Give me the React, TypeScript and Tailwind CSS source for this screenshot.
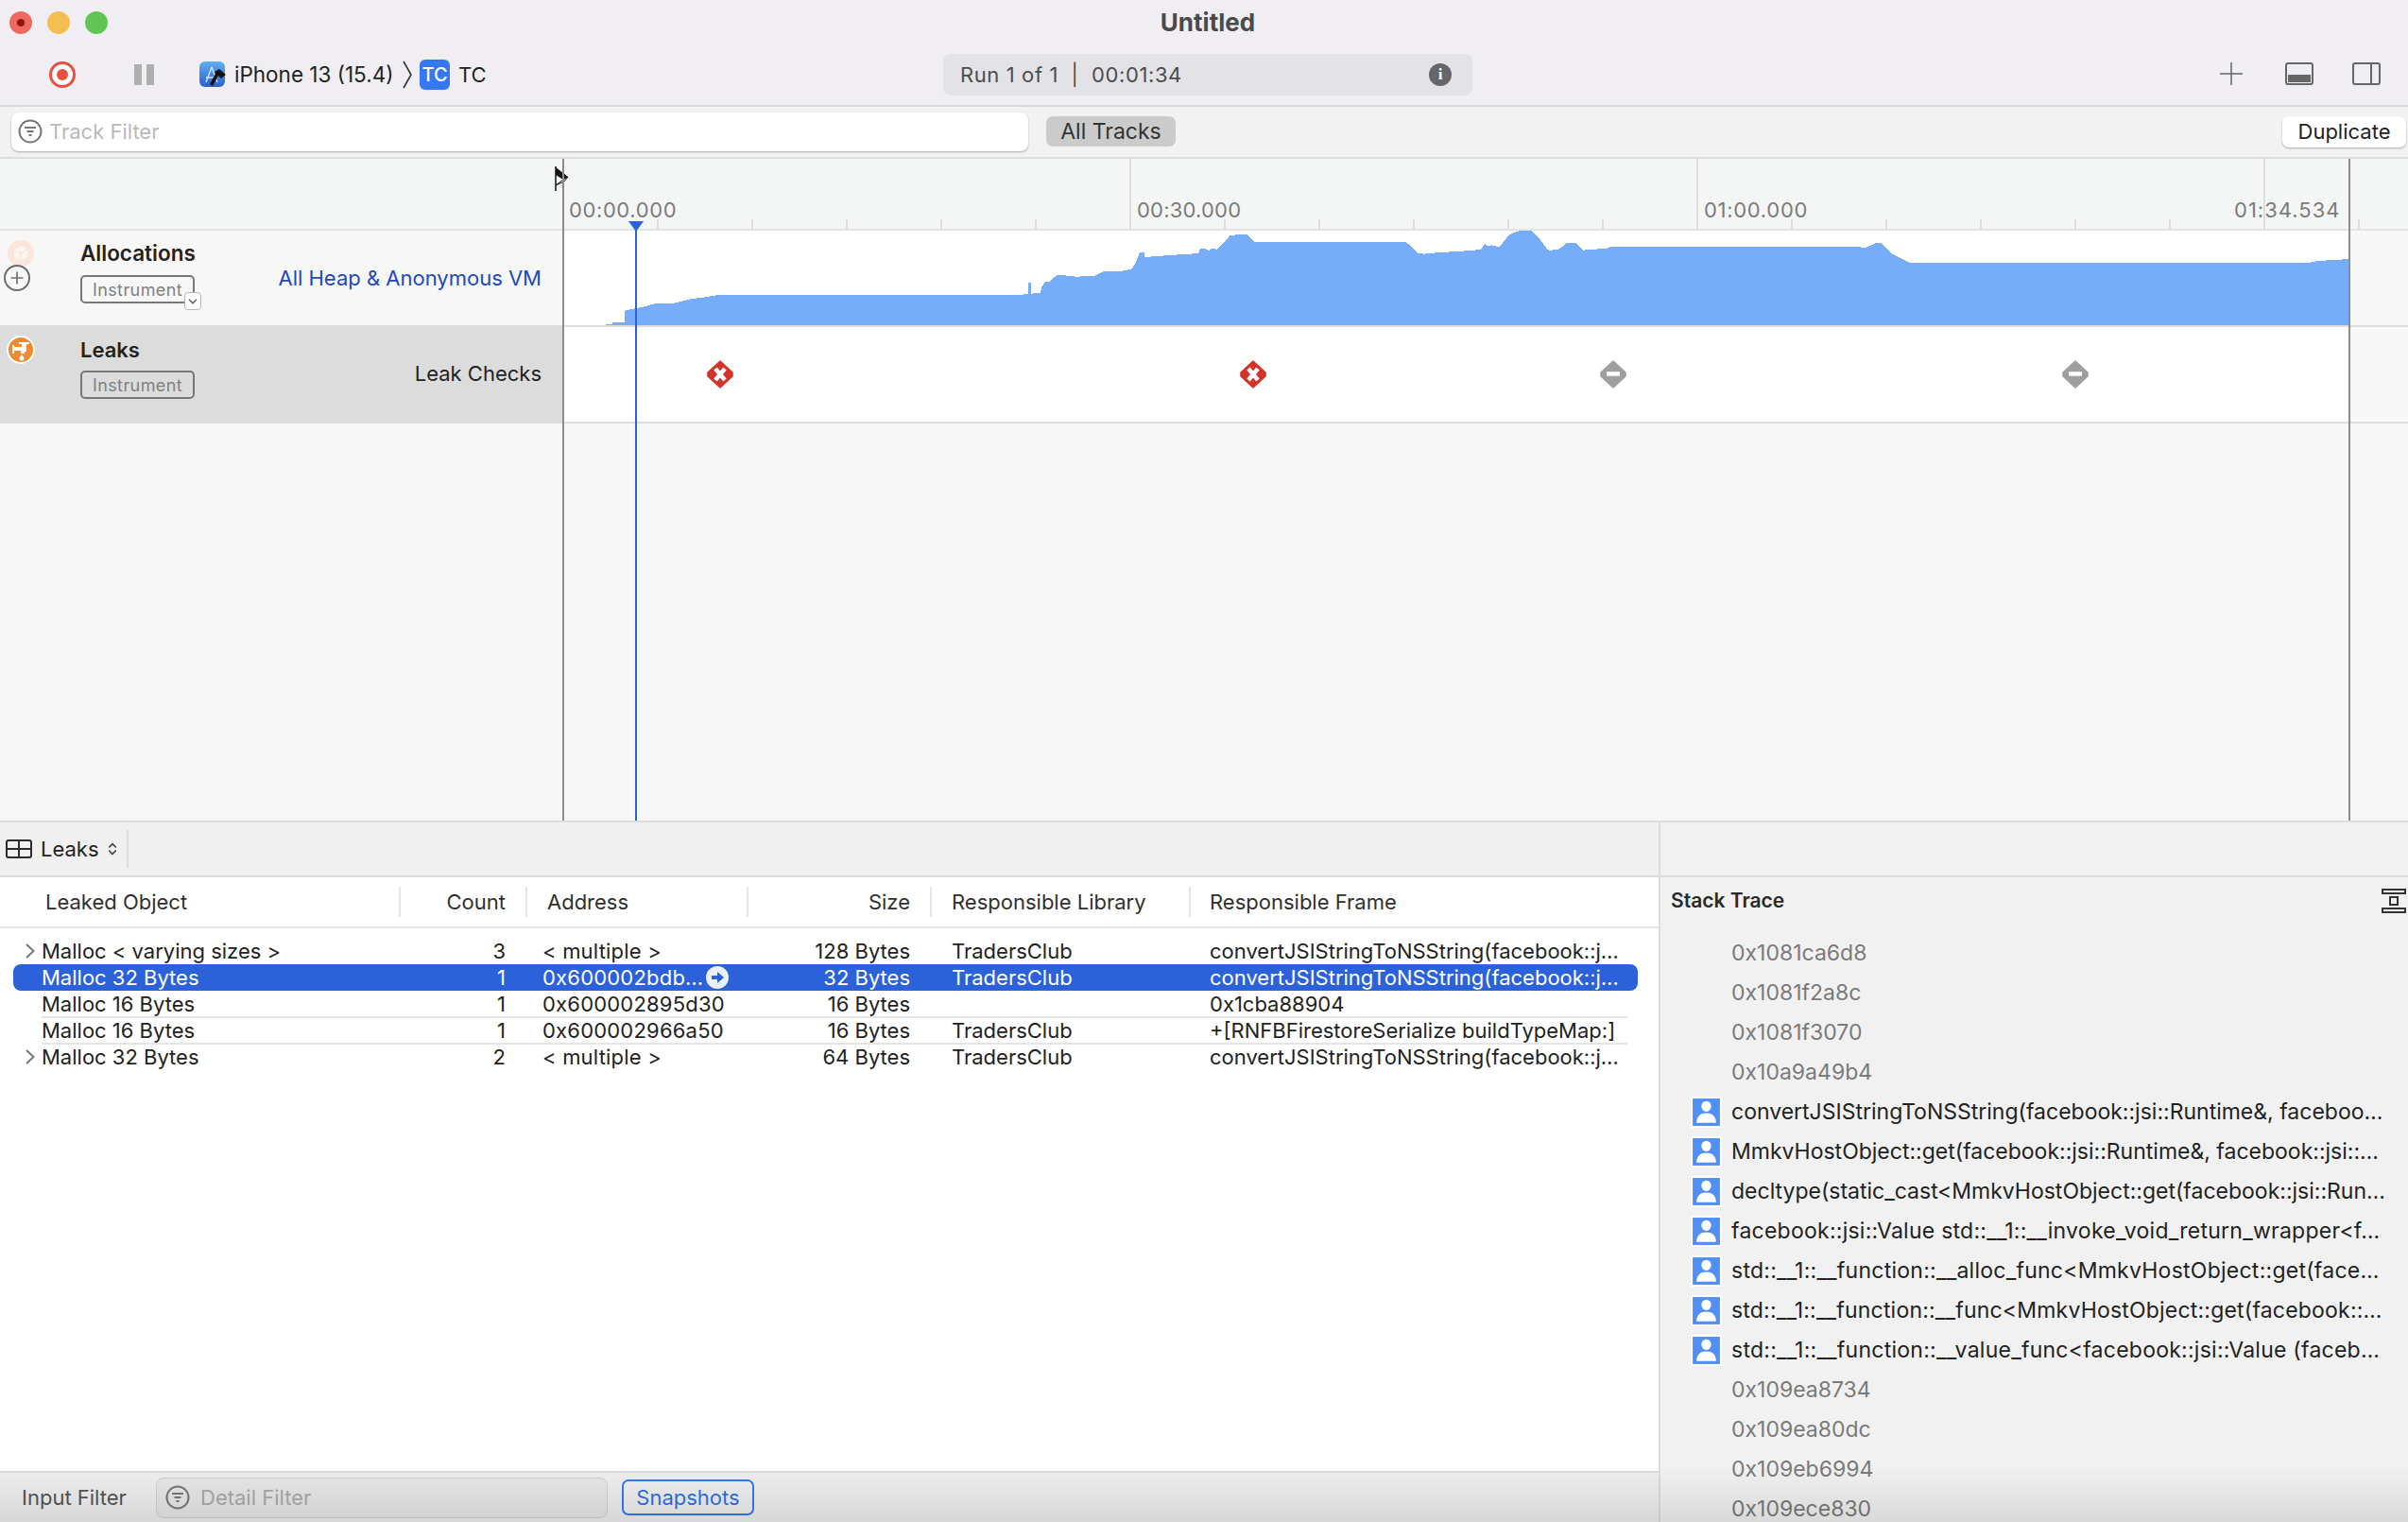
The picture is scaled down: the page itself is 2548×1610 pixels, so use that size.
import { ChevronDown, ChevronsUpDown, Plus } from 'lucide-react'

const font = "font-['Inter','Liberation_Sans',sans-serif]"

// chart outline read off the reference, x in page px from the timeline's left edge
const chartTop: [number, number][] = [
  [64, 432], [64, 430], [76, 430], [76, 424], [96, 424], [96, 386], [115, 378], [130, 372], [145, 364], [178, 362], [190, 356], [205, 349], [230, 343], [250, 336],
  [752, 336], [765, 332], [765, 297], [770, 297], [770, 332], [785, 330], [788, 310], [793, 295], [800, 295], [808, 280], [815, 272], [845, 278], [875, 276], [890, 262], [920, 260], [935, 255], [942, 240], [950, 202], [958, 202], [958, 216],
  [1000, 210], [1048, 204], [1050, 190], [1060, 190], [1065, 195], [1070, 188], [1078, 192], [1090, 170], [1100, 148], [1110, 145], [1128, 145], [1140, 168], [1392, 168], [1402, 185], [1412, 205],
]
const chartEnd: [number, number][] = [
  [0, 203], [10, 206], [30, 202], [70, 197], [100, 192], [106, 174], [112, 182], [118, 178], [125, 182], [130, 183], [145, 145], [160, 133], [180, 133], [190, 150], [205, 190], [210, 195], [225, 190], [235, 172], [250, 170], [262, 194], [300, 188], [305, 183],
  [698, 183], [708, 187], [725, 172], [735, 172], [750, 205], [780, 234], [1410, 234], [1425, 228], [1475, 222], [1475, 432],
]
const chartPoints = [
  ...chartTop.map(([x, y]) => `${600 + x / 1.568 - 596},${200 + y / 3 - 244}`),
  ...chartEnd.map(([x, y]) => `${1500 + x / 1.496 - 596},${200 + y / 3 - 244}`),
].join(' ')

const ticks = Array.from({ length: 20 }).map((_, i) => i)

const leakRows = [
  { name: 'Malloc < varying sizes >', count: '3', address: '< multiple >', size: '128 Bytes', lib: 'TradersClub', frame: 'convertJSIStringToNSString(facebook::j…', more: true },
  { name: 'Malloc 32 Bytes', count: '1', address: '0x600002bdb…', size: '32 Bytes', lib: 'TradersClub', frame: 'convertJSIStringToNSString(facebook::j…', selected: true },
  { name: 'Malloc 16 Bytes', count: '1', address: '0x600002895d30', size: '16 Bytes', lib: '', frame: '0x1cba88904', line: true },
  { name: 'Malloc 16 Bytes', count: '1', address: '0x600002966a50', size: '16 Bytes', lib: 'TradersClub', frame: '+[RNFBFirestoreSerialize buildTypeMap:]', line: true },
  { name: 'Malloc 32 Bytes', count: '2', address: '< multiple >', size: '64 Bytes', lib: 'TradersClub', frame: 'convertJSIStringToNSString(facebook::j…', more: true },
]

const stackRows = [
  { text: '0x1081ca6d8', style: 'text-[#7a7a7a]' },
  { text: '0x1081f2a8c', style: 'text-[#7a7a7a]' },
  { text: '0x1081f3070', style: 'text-[#7a7a7a]' },
  { text: '0x10a9a49b4', style: 'text-[#7a7a7a]' },
  { text: 'convertJSIStringToNSString(facebook::jsi::Runtime&, faceboo…', user: true, style: 'text-[#222]' },
  { text: 'MmkvHostObject::get(facebook::jsi::Runtime&, facebook::jsi::…', user: true, style: 'text-[#222]' },
  { text: 'decltype(static_cast<MmkvHostObject::get(facebook::jsi::Run…', user: true, style: 'text-[#222]' },
  { text: 'facebook::jsi::Value std::__1::__invoke_void_return_wrapper<f…', user: true, style: 'text-[#222] tracking-[0.25px]' },
  { text: 'std::__1::__function::__alloc_func<MmkvHostObject::get(face…', user: true, style: 'text-[#222] tracking-[0.25px]' },
  { text: 'std::__1::__function::__func<MmkvHostObject::get(facebook::…', user: true, style: 'text-[#222] tracking-[0.2px]' },
  { text: 'std::__1::__function::__value_func<facebook::jsi::Value (faceb…', user: true, style: 'text-[#222] tracking-[0.25px]' },
  { text: '0x109ea8734', style: 'text-[#7a7a7a]' },
  { text: '0x109ea80dc', style: 'text-[#7a7a7a]' },
  { text: '0x109eb6994', style: 'text-[#7a7a7a]' },
  { text: '0x109ece830', style: 'text-[#7a7a7a]' },
]

function FilterIcon({ className }: { className: string }) {
  return (
    <svg viewBox="0 0 26 26" className={className} fill="none" stroke="#777" strokeWidth="2">
      <circle cx="13" cy="13" r="11.5" />
      <path d="M7 9h12M9.5 13h7M11.5 17h3" />
    </svg>
  )
}

function UserIcon() {
  return (
    <svg viewBox="0 0 32 32" className="w-[33px] h-[33px]">
      <rect x="0" y="0" width="32" height="32" fill="#ffffff" />
      <rect x="2" y="2" width="28" height="28" fill="#518ff5" />
      <ellipse cx="16" cy="10" rx="5" ry="5.5" fill="#ffffff" />
      <path d="M6 27c0-7 4-10 10-10s10 3 10 10z" fill="#ffffff" />
    </svg>
  )
}

function Diamond({ left, kind }: { left: string; kind: 'error' | 'stop' }) {
  return (
    <svg viewBox="0 0 30 30" className={`absolute top-[35px] w-[30px] h-[30px] ${left}`}>
      <path d="M15 1 L28 13 V17 L15 29 L2 17 V13 Z" fill={kind === 'error' ? '#d2332a' : '#9f9f9f'} stroke={kind === 'error' ? '#d2332a' : '#9f9f9f'} strokeWidth="1.5" strokeLinejoin="round" />
      {kind === 'error' ? (
        <path d="M10 9 L20 21 M20 9 L10 21" stroke="#ffffff" strokeWidth="4.5" />
      ) : (
        <path d="M8 14.5 H22" stroke="#ffffff" strokeWidth="4.5" />
      )}
    </svg>
  )
}

function Instrument() {
  return (
    <div className="w-[121px] h-[30px] flex items-center justify-center rounded-[5px] border-2 border-[#787878] text-[18px] tracking-[0.4px] text-[#808080]">
      Instrument
    </div>
  )
}

export default function App() {
  return (
    <div className={`${font} relative w-[2548px] h-[1610px] overflow-hidden flex flex-col bg-white text-[#222]`}>
      {/* Toolbar */}
      <div className="relative h-[113px] shrink-0 bg-[#f0eef3] border-b-2 border-[#d8d8d8]">
        <div className="flex items-center justify-center h-[46px] pl-[8px] text-[26px] font-bold text-[#4a4a4a]">Untitled</div>
        <div className="absolute left-[10px] top-[12px] flex gap-[16px]">
          <div className="w-[24px] h-[24px] rounded-full bg-[#ee6a5f] flex items-center justify-center">
            <div className="w-[8px] h-[8px] rounded-full bg-[#8c1a10]" />
          </div>
          <div className="w-[24px] h-[24px] rounded-full bg-[#f5bf4f]" />
          <div className="w-[24px] h-[24px] rounded-full bg-[#61c554]" />
        </div>
        <div className="flex items-center h-[46px] mt-[10px]">
          <div className="ml-[52px] w-[28px] h-[28px] rounded-full border-[3px] border-[#e8503f] flex items-center justify-center bg-white">
            <div className="w-[12px] h-[12px] rounded-full bg-[#e8503f]" />
          </div>
          <div className="ml-[62px] flex gap-[5px]">
            <div className="w-[8px] h-[22px] bg-[#aeaeae]" />
            <div className="w-[8px] h-[22px] bg-[#aeaeae]" />
          </div>
          <svg viewBox="0 0 30 30" className="ml-[47px] w-[30px] h-[30px]">
            <defs>
              <linearGradient id="appIcon" x1="0" y1="0" x2="0" y2="1">
                <stop offset="0" stopColor="#5fb0f2" />
                <stop offset="1" stopColor="#2a5fd0" />
              </linearGradient>
            </defs>
            <rect x="1" y="1" width="27" height="27" rx="6" fill="url(#appIcon)" />
            <path d="M8 23 L14 7 M20 23 L14 7 M8 18 H20" stroke="#cfe4ff" strokeWidth="1.4" fill="none" />
            <path d="M22 9 L29 15 L24 19 L21 16 L15 27 L12 25 L18 14 L17 12 Z" fill="#111" />
          </svg>
          <span className="ml-[8px] w-[168px] text-[22.5px] whitespace-nowrap">iPhone 13 (15.4)</span>
          <svg viewBox="0 0 12 30" className="ml-[9px] w-[12px] h-[30px]" fill="none" stroke="#333" strokeWidth="1.6">
            <path d="M2 1 L10 15 L2 29" />
          </svg>
          <div className="ml-[7px] w-[32px] h-[32px] rounded-[6px] bg-[#3478f6] text-white text-[20px] font-medium flex items-center justify-center">TC</div>
          <span className="ml-[9px] text-[22px]">TC</span>
          <div className="absolute left-[998px] top-[57px] w-[560px] h-[44px] rounded-[8px] bg-[#e3e2e7] flex items-center justify-between pl-[18px] pr-[22px]">
            <span className="text-[22px] tracking-[0.6px] text-[#4c4c4c] whitespace-pre">Run 1 of 1  |  00:01:34</span>
            <div className="w-[24px] h-[24px] rounded-full bg-[#66666c] text-white text-[17px] font-bold flex items-center justify-center font-['Liberation_Serif',serif]">i</div>
          </div>
          <div className="absolute right-[29px] top-[66px] flex items-center gap-[41px]">
            <svg viewBox="0 0 24 24" className="mr-[4px] w-[24px] h-[24px]" fill="none" stroke="#666" strokeWidth="1.5">
              <path d="M12 0v24M0 12h24" />
            </svg>
            <div className="w-[30px] h-[24px] rounded-[3px] border-2 border-[#666] flex flex-col justify-end p-[1px]">
              <div className="h-[8px] bg-[#666]" />
            </div>
            <div className="w-[30px] h-[24px] rounded-[3px] border-2 border-[#666] flex justify-end">
              <div className="w-[9px] border-l-2 border-[#666]" />
            </div>
          </div>
        </div>
      </div>

      {/* Track filter */}
      <div className="h-[55px] shrink-0 bg-[#f2f2f2] border-b-2 border-[#dcdcdc] flex items-center pl-[12px] pr-[2px] pb-[1px]">
        <div className="w-[1076px] h-[41px] rounded-[8px] bg-white shadow-[0_1px_2px_rgba(0,0,0,0.3)] flex items-center pl-[7px] gap-[7px]">
          <FilterIcon className="w-[26px] h-[26px]" />
          <span className="text-[22px] text-[#b9b9b9]">Track Filter</span>
        </div>
        <div className="ml-[19px] w-[137px] h-[32px] rounded-[7px] bg-[#cbcbcb] text-[23px] text-[#333] flex items-center justify-center">All Tracks</div>
        <div className="ml-auto w-[131px] h-[33px] rounded-[7px] bg-white shadow-[0_1px_2px_rgba(0,0,0,0.3)] text-[22px] flex items-center justify-center">Duplicate</div>
      </div>

      {/* Timeline */}
      <div className="relative h-[702px] shrink-0 bg-[#f7f7f7] border-b-2 border-[#dcdcdc]">
        <div className="relative h-[76px] bg-[#f4f6f5] border-b-2 border-[#e3e3e3]">
          {ticks.map((i) => (
            <div key={i} className={`absolute bottom-0 w-[2px] bg-[#dedede] ${i % 6 === 0 ? 'h-[74px]' : 'h-[10px]'}`} style={{ left: 595 + i * 100 }} />
          ))}
          <span className="absolute left-[602px] top-[38px] text-[22px] tracking-[0.6px] text-[#7b7b7b]">00:00.000</span>
          <span className="absolute left-[1203px] top-[38px] text-[22px] tracking-[0.2px] text-[#7b7b7b]">00:30.000</span>
          <span className="absolute left-[1803px] top-[38px] text-[22px] tracking-[0.7px] text-[#7b7b7b]">01:00.000</span>
          <span className="absolute left-[2364px] top-[38px] text-[22px] tracking-[1px] text-[#7b7b7b]">01:34.534</span>
          <svg viewBox="0 0 16 26" className="absolute left-[587px] top-[8px] w-[16px] h-[26px]">
            <path d="M1 0 V26" stroke="#111" strokeWidth="1.5" />
            <path d="M1 1 L14 11 L9 14 L1 9 Z" fill="#111" />
            <path d="M1 20 L9 14 L14 11 L10 16 Z" fill="#fff" stroke="#111" strokeWidth="1" />
          </svg>
        </div>

        {/* Allocations track */}
        <div className="flex h-[102px] border-b-2 border-[#dedede]">
          <div className="relative w-[596px] shrink-0 bg-[#f7f7f7] pl-[85px] pt-[11px]">
            <div className="text-[22.5px] font-semibold leading-[26px]">Allocations</div>
            <div className="relative mt-[10px] w-[121px]">
              <Instrument />
              <div className="absolute left-[110px] top-[18px] w-[18px] h-[19px] rounded-[4px] bg-white border border-[#b5b5b5] flex items-center justify-center">
                <ChevronDown className="w-[14px] h-[14px] text-[#666]" strokeWidth={3} />
              </div>
            </div>
            <svg viewBox="0 0 28 28" className="absolute left-[8px] top-[10px] w-[28px] h-[28px]">
              <circle cx="14" cy="14" r="14" fill="#fae6da" />
              <path d="M14 6 L21 10 V18 L14 22 L7 18 V10 Z" fill="#fdf5ef" />
              <path d="M7 10 L14 14 L21 10 M14 14 V22" fill="none" stroke="#f7dfd0" strokeWidth="1" />
            </svg>
            <div className="absolute left-[4px] top-[36px] w-[28px] h-[28px] rounded-full border-2 border-[#6d6d6d] bg-[#f7f7f7] flex items-center justify-center">
              <Plus className="w-[20px] h-[20px] text-[#6d6d6d]" strokeWidth={2} />
            </div>
            <span className="absolute right-[23px] top-[34px] text-[22px] text-[#1e49c0] whitespace-nowrap">All Heap &amp; Anonymous VM</span>
          </div>
          <div className="w-[1890px] shrink-0 bg-white">
            <svg className="w-[1890px] h-[100px] block" shapeRendering="crispEdges">
              <polygon points={chartPoints} fill="#77acf8" />
            </svg>
          </div>
        </div>

        {/* Leaks track */}
        <div className="flex h-[102px] border-b-2 border-[#dedede]">
          <div className="relative w-[596px] shrink-0 bg-[#dcdcdc] pl-[85px] pt-[11px]">
            <div className="text-[22px] font-semibold leading-[26px]">Leaks</div>
            <div className="mt-[9px]">
              <Instrument />
            </div>
            <svg viewBox="0 0 30 30" className="absolute left-[7px] top-[9px] w-[30px] h-[30px]">
              <circle cx="15" cy="15" r="14" fill="#ee8a2f" stroke="#ffffff" strokeWidth="2" />
              <path d="M13 7h11v2h-3v8h-2v2h-4v-3H8v3H6v-9h2v2h8V9h-3z" fill="#ffffff" />
              <path d="M16 20c1.5 2 2.5 3 2.5 4a2.5 2.5 0 0 1-5 0c0-1 1-2 2.500-4z" fill="#ffffff" />
            </svg>
            <span className="absolute right-[23px] top-[33px] text-[22px] whitespace-nowrap">Leak Checks</span>
          </div>
          <div className="relative w-[1890px] shrink-0 bg-white">
            <Diamond left="left-[151px]" kind="error" />
            <Diamond left="left-[715px]" kind="error" />
            <Diamond left="left-[1096px]" kind="stop" />
            <Diamond left="left-[1585px]" kind="stop" />
          </div>
        </div>

        {/* Timeline edges and playhead */}
        <div className="absolute left-[595px] top-0 bottom-0 w-[2px] bg-[#8c8c8c]" />
        <div className="absolute left-[2485px] top-0 bottom-0 w-[2px] bg-[#8c8c8c]" />
        <div className="absolute left-[672px] top-[76px] bottom-0 w-[2px] bg-[#2a62d9]" />
        <div className="absolute left-[665px] top-[66px] w-0 h-0 border-x-[8px] border-x-transparent border-t-[11px] border-t-[#2a62d9]" />
      </div>

      {/* Detail area */}
      <div className="flex flex-1 min-h-0">
        <div className="flex flex-col w-[1755px] shrink-0">
          <div className="h-[58px] shrink-0 bg-[#f0f0f0] border-b-2 border-[#dcdcdc] flex items-center pl-[6px]">
            <svg viewBox="0 0 28 20" className="w-[28px] h-[20px]" fill="none" stroke="#2c2c2c" strokeWidth="2">
              <rect x="1" y="1" width="26" height="18" rx="2" />
              <path d="M14 1v18M1 10h26" />
            </svg>
            <span className="ml-[9px] text-[22px]">Leaks</span>
            <ChevronsUpDown className="ml-[6px] w-[16px] h-[20px] text-[#444]" strokeWidth={2.5} />
            <div className="ml-[7px] w-[2px] h-[40px] bg-[#dcdcdc]" />
          </div>
          <div className="h-[54px] shrink-0 bg-white border-b-2 border-[#e5e5e5] flex items-center text-[22px] text-[#303030]">
            <div className="w-[424px] pl-[48px] h-[32px] leading-[32px] border-r-2 border-[#e5e5e5]">Leaked Object</div>
            <div className="w-[134px] pr-[21px] h-[32px] leading-[32px] text-right border-r-2 border-[#e5e5e5]">Count</div>
            <div className="w-[234px] pl-[21px] h-[32px] leading-[32px] border-r-2 border-[#e5e5e5]">Address</div>
            <div className="w-[194px] pr-[21px] h-[32px] leading-[32px] text-right border-r-2 border-[#e5e5e5]">Size</div>
            <div className="w-[274px] pl-[21px] h-[32px] leading-[32px] border-r-2 border-[#e5e5e5]">Responsible Library</div>
            <div className="pl-[20px] h-[32px] leading-[32px]">Responsible Frame</div>
          </div>
          <div className="flex-1 min-h-0 bg-white pt-[10px]">
            {leakRows.map((row, i) => (
              <div key={i} className={`relative flex items-center h-[28px] ml-[14px] w-[1719px] text-[22px] leading-[28px] whitespace-nowrap ${row.selected ? 'bg-[#2b62d9] rounded-[8px] text-white' : ''}`}>
                {row.more && (
                  <svg viewBox="0 0 10 16" className="absolute left-[13px] top-[6px] w-[10px] h-[16px]" fill="none" stroke="#777" strokeWidth="2">
                    <path d="M1 1 L8.500 8 L1 15" />
                  </svg>
                )}
                <div className="w-[410px] pl-[30px]">{row.name}</div>
                <div className="w-[111px] text-right">{row.count}</div>
                <div className="relative w-[230px] pl-[39px] tracking-[0.2px]">
                  {row.address}
                  {row.selected && (
                    <svg viewBox="0 0 24 24" className="absolute left-[212px] top-[2px] w-[24px] h-[24px]">
                      <circle cx="12" cy="12" r="12" fill="#ffffff" fillOpacity="0.9" />
                      <path d="M6 10h6V6l7 6-7 6v-4H6z" fill="#2b62d9" />
                    </svg>
                  )}
                </div>
                <div className="w-[198px] text-right">{row.size}</div>
                <div className="w-[317px] pl-[44px]">{row.lib}</div>
                <div>{row.frame}</div>
                {row.line && <div className="absolute left-[30px] right-[11px] bottom-[-1px] h-[2px] bg-[#e5e5e5]" />}
              </div>
            ))}
          </div>
          <div className="h-[54px] shrink-0 bg-[#efefef] border-t-2 border-[#dcdcdc] flex items-center pl-[23px]">
            <span className="w-[142px] text-[22px] text-[#555]">Input Filter</span>
            <div className="w-[478px] h-[43px] rounded-[8px] bg-[#e8e8e8] border border-[#d0d0d0] flex items-center pl-[9px] gap-[11px]">
              <FilterIcon className="w-[26px] h-[26px]" />
              <span className="text-[22px] text-[#aaaaaa]">Detail Filter</span>
            </div>
            <div className="ml-[15px] w-[140px] h-[38px] rounded-[7px] border-2 border-[#3478f6] text-[22px] text-[#2f6fe8] flex items-center justify-center">Snapshots</div>
          </div>
        </div>

        {/* Stack trace */}
        <div className="flex-1 min-w-0 border-l-2 border-[#dcdcdc] bg-[#f1f1f1] flex flex-col">
          <div className="h-[58px] shrink-0 border-b-2 border-[#dcdcdc]" />
          <div className="h-[50px] shrink-0 flex items-center justify-between pl-[11px] pr-[2px]">
            <span className="text-[21px] font-semibold text-[#2a2a2a]">Stack Trace</span>
            <svg viewBox="0 0 26 26" className="w-[26px] h-[26px]" fill="none" stroke="#333" strokeWidth="2">
              <rect x="1" y="1" width="24" height="4" />
              <rect x="1" y="21" width="24" height="4" />
              <rect x="9" y="9" width="8" height="8" />
            </svg>
          </div>
          <div className="pt-[9px]">
            {stackRows.map((row, i) => (
              <div key={i} className="flex items-center h-[42px] pl-[32px] whitespace-nowrap">
                <div className="w-[33px] h-[33px] shrink-0">{row.user && <UserIcon />}</div>
                <span className={`ml-[10px] text-[23px] ${row.style}`}>{row.text}</span>
              </div>
            ))}
          </div>
        </div>
      </div>

      {/* Window shadow at the bottom edge of the capture */}
      <div className="absolute left-0 right-0 bottom-0 h-[60px] bg-gradient-to-t from-black/10 to-transparent pointer-events-none" />
    </div>
  )
}
